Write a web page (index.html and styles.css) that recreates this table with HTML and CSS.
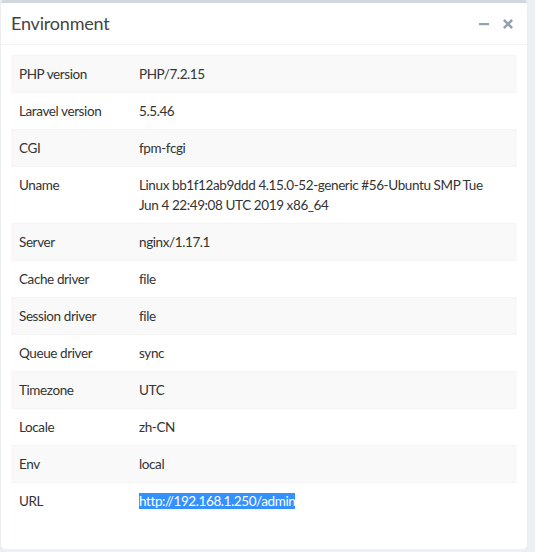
FILE: index.html
```html
<!DOCTYPE html>
<html lang="en">
<head>
<meta charset="utf-8">
<title>Environment</title>
<link rel="stylesheet" href="styles.css">
</head>
<body>
<div class="box">
  <div class="box-header">
    <h3 class="box-title">Environment</h3>
    <div class="box-tools">
      <button class="btn-tool" type="button" aria-label="Collapse">
        <svg width="10" height="10" viewBox="0 0 10 10"><rect x="0" y="4" width="10" height="2.2" fill="#97a0b3"/></svg>
      </button>
      <button class="btn-tool" type="button" aria-label="Remove">
        <svg width="10" height="10" viewBox="0 0 10 10"><path d="M1.8 1.8 L8.2 8.2 M8.2 1.8 L1.8 8.2" stroke="#97a0b3" stroke-width="2.6" stroke-linecap="square"/></svg>
      </button>
    </div>
  </div>
  <div class="box-body">
    <table class="table">
      <tbody>
        <tr><td class="key">PHP version</td><td>PHP/7.2.15</td></tr>
        <tr><td class="key">Laravel version</td><td>5.5.46</td></tr>
        <tr><td class="key">CGI</td><td>fpm-fcgi</td></tr>
        <tr><td class="key">Uname</td><td><span class="uname">Linux bb1f12ab9ddd 4.15.0-52-generic #56-Ubuntu SMP Tue Jun 4 22:49:08 UTC 2019 x86_64</span></td></tr>
        <tr><td class="key">Server</td><td>nginx/1.17.1</td></tr>
        <tr><td class="key">Cache driver</td><td>file</td></tr>
        <tr><td class="key">Session driver</td><td>file</td></tr>
        <tr><td class="key">Queue driver</td><td>sync</td></tr>
        <tr><td class="key">Timezone</td><td>UTC</td></tr>
        <tr><td class="key">Locale</td><td>zh-CN</td></tr>
        <tr><td class="key">Env</td><td>local</td></tr>
        <tr><td class="key">URL</td><td><span class="selected">http://192.168.1.250/admin</span></td></tr>
      </tbody>
    </table>
  </div>
</div>
</body>
</html>
```
FILE: styles.css
```css
html, body {
  margin: 0;
  padding: 0;
}
body {
  background: #ecf0f5;
  font-family: Lato, "Open Sans", sans-serif;
  font-size: 13.5px;
  letter-spacing: -0.4px;
  line-height: 20px;
  color: #333;
}
.box {
  width: 526px;
  margin-left: 1px;
  background: #fff;
  border-top: 3px solid #d2d6de;
  border-radius: 3px;
  box-shadow: 0 1px 1px rgba(0, 0, 0, 0.1);
}
.box-header {
  display: flex;
  align-items: center;
  justify-content: space-between;
  padding: 10px;
  border-bottom: 1px solid #f4f4f4;
  color: #444;
}
.box-title {
  margin: 0;
  font-size: 18px;
  font-weight: 400;
  line-height: 21px;
  letter-spacing: -0.2px;
}
.box-tools {
  display: flex;
  gap: 4px;
  margin-right: -1px;
}
.btn-tool {
  display: flex;
  align-items: center;
  justify-content: center;
  padding: 5px;
  border: 0;
  background: transparent;
}
.btn-tool svg {
  display: block;
}
.box-body {
  padding: 10px;
}
.table {
  width: 100%;
  border-collapse: collapse;
  border-spacing: 0;
  margin-bottom: 20px;
}
.table td {
  padding: 8px;
  border-top: 1px solid #f4f4f4;
  vertical-align: top;
  text-align: left;
}
.table tr:nth-child(odd) td {
  background: #f9f9f9;
}
.table td.key {
  width: 104px;
}
.uname {
  display: inline-block;
  max-width: 354px;
}
.selected {
  background: #3390ff;
  color: #fff;
}
```
